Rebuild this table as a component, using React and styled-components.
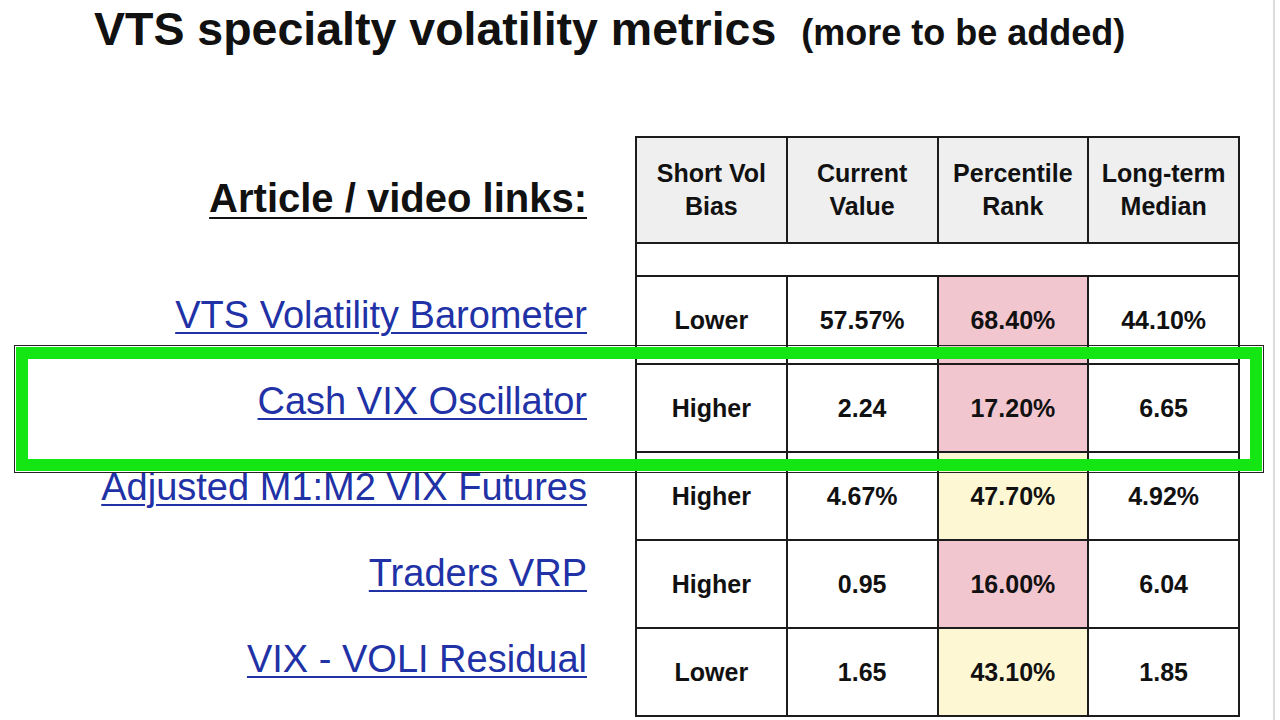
import React from "react";
import styled, { createGlobalStyle } from "styled-components";

const links = [
  "VTS Volatility Barometer",
  "Cash VIX Oscillator",
  "Adjusted M1:M2 VIX Futures",
  "Traders VRP",
  "VIX - VOLI Residual",
];

const rows = [
  { bias: "Lower", value: "57.57%", rank: "68.40%", tone: "pink", median: "44.10%" },
  { bias: "Higher", value: "2.24", rank: "17.20%", tone: "pink", median: "6.65" },
  { bias: "Higher", value: "4.67%", rank: "47.70%", tone: "yellow", median: "4.92%" },
  { bias: "Higher", value: "0.95", rank: "16.00%", tone: "pink", median: "6.04" },
  { bias: "Lower", value: "1.65", rank: "43.10%", tone: "yellow", median: "1.85" },
];

export default function App() {
  return (
    <>
      <GlobalStyle />
      <Page>
        <Title>
          VTS specialty volatility metrics
          <TitleNote>(more to be added)</TitleNote>
        </Title>

        <Content>
          <LinkColumn>
            <LinkHeader>Article / video links:</LinkHeader>
            {links.map((label) => (
              <LinkRow key={label}>
                <MetricLink href="#">{label}</MetricLink>
              </LinkRow>
            ))}
          </LinkColumn>

          <MetricsTable>
            <colgroup>
              <col />
              <col />
              <col />
              <col />
            </colgroup>
            <thead>
              <tr>
                <HeadCell>Short Vol<br />Bias</HeadCell>
                <HeadCell>Current<br />Value</HeadCell>
                <HeadCell>Percentile<br />Rank</HeadCell>
                <HeadCell>Long-term<br />Median</HeadCell>
              </tr>
            </thead>
            <tbody>
              <SpacerRow>
                <td colSpan={4} />
              </SpacerRow>
              {rows.map((r, i) => (
                <DataRow key={i}>
                  <Cell>{r.bias}</Cell>
                  <Cell>{r.value}</Cell>
                  <Cell $tone={r.tone}>{r.rank}</Cell>
                  <Cell>{r.median}</Cell>
                </DataRow>
              ))}
            </tbody>
          </MetricsTable>
        </Content>

        <Highlight>
          <HighlightInner />
        </Highlight>
      </Page>
    </>
  );
}

const GlobalStyle = createGlobalStyle`
  html, body {
    margin: 0;
    padding: 0;
    background: #ffffff;
  }
`;

const Page = styled.div`
  position: relative;
  width: 1273px;
  height: 720px;
  overflow: hidden;
  border-right: 2px solid #dcdcdc;
  font-family: "Liberation Sans", Arial, sans-serif;
  color: #111;
`;

const Title = styled.h1`
  margin: 0;
  padding: 3px 0 0 94px;
  font-size: 46.5px;
  line-height: 52px;
  font-weight: 700;
  white-space: nowrap;
`;

const TitleNote = styled.span`
  margin-left: 25px;
  font-size: 36px;
`;

const Content = styled.div`
  display: flex;
  gap: 48px;
  margin-top: 77px;
`;

const LinkColumn = styled.div`
  flex: 0 0 587px;
  display: flex;
  flex-direction: column;
  align-items: flex-end;
  padding-top: 3px;
`;

const LinkHeader = styled.div`
  height: 118px;
  line-height: 118px;
  margin-bottom: 15px;
  font-size: 40px;
  font-weight: 700;
  text-decoration: underline;
  text-decoration-thickness: 2px;
  text-underline-offset: 5px;
  white-space: nowrap;
`;

const LinkRow = styled.div`
  height: 86px;
  line-height: 86px;
`;

const MetricLink = styled.a`
  font-size: 38px;
  color: #2131a6;
  text-decoration: underline;
  text-decoration-thickness: 2px;
  text-underline-offset: 4px;
  white-space: nowrap;
`;

const MetricsTable = styled.table`
  width: 605px;
  table-layout: fixed;
  border-collapse: collapse;
  align-self: flex-start;

  col {
    width: 25%;
  }
`;

const HeadCell = styled.th`
  height: 104px;
  padding: 0;
  border: 2px solid #1c1c1c;
  background: #efefef;
  font-size: 25px;
  line-height: 33px;
  font-weight: 700;
  text-align: center;
  vertical-align: middle;
`;

const SpacerRow = styled.tr`
  td {
    height: 31px;
    padding: 0;
    border: 2px solid #1c1c1c;
  }
`;

const DataRow = styled.tr`
  height: 88px;
`;

const Cell = styled.td`
  padding: 0;
  border: 2px solid #1c1c1c;
  background: ${(p) =>
    p.$tone === "pink" ? "#f2c6cf" : p.$tone === "yellow" ? "#fdf7d4" : "#ffffff"};
  font-size: 25px;
  font-weight: 700;
  text-align: center;
  vertical-align: middle;
`;

const Highlight = styled.div`
  position: absolute;
  left: 14px;
  top: 345px;
  width: 1250px;
  height: 128px;
  box-sizing: border-box;
  border: 1.5px solid #222;
  padding: 1px;
`;

const HighlightInner = styled.div`
  width: 100%;
  height: 100%;
  box-sizing: border-box;
  border: 12px solid #14e614;
`;
